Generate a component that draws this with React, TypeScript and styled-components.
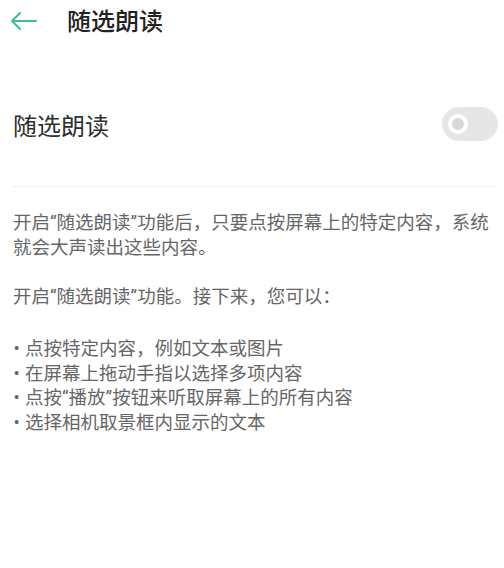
import React from "react";
import styled, { createGlobalStyle } from "styled-components";

const Global = createGlobalStyle`
  html, body { margin: 0; padding: 0; background: #ffffff; }
  body {
    font-family: Roboto, "Noto Sans CJK SC", sans-serif;
    -webkit-font-smoothing: antialiased;
  }
`;

const Page = styled.div`
  width: 504px;
  min-height: 568px;
  background: #fff;
  display: flex;
  flex-direction: column;
`;

const Header = styled.header`
  height: 42px;
  display: flex;
  align-items: center;
  padding-left: 10px;
  gap: 30px;
`;

const BackButton = styled.button`
  border: 0;
  background: none;
  padding: 0;
  width: 27px;
  height: 24px;
  display: flex;
  align-items: center;
  justify-content: center;
  cursor: pointer;
`;

const Title = styled.h1`
  margin: 0;
  font-size: 24px;
  font-weight: 500;
  color: #222;
  line-height: 1;
  padding-top: 2px;
`;

const SettingRow = styled.div`
  margin-top: 57px;
  height: 50px;
  padding: 0 6px 0 13px;
  display: flex;
  align-items: center;
  justify-content: space-between;
`;

const Label = styled.span`
  font-size: 24px;
  color: #2e2e2e;
  font-weight: 400;
`;

const Switch = styled.button<{ $on?: boolean }>`
  width: 56px;
  height: 34px;
  border-radius: 17px;
  border: 0;
  background: ${(p) => (p.$on ? "#3dbd8d" : "#e6e6e6")};
  padding: 0 0 0 6px;
  display: flex;
  align-items: center;
  cursor: pointer;
`;

const Knob = styled.span`
  width: 20px;
  height: 20px;
  border-radius: 50%;
  box-sizing: border-box;
  border: 4px solid #ffffff;
  background: #d8d8d8;
`;

const Divider = styled.hr`
  margin: 37px 7px 0 13px;
  border: 0;
  height: 1px;
  background: #eeeeee;
`;

const Body = styled.div`
  padding: 24px 8px 0 13px;
  font-size: 18.5px;
  line-height: 24.5px;
  color: #666;
`;

const Para = styled.p`
  margin: 0 0 24.5px 0;
`;

const List = styled.ul`
  margin: 0;
  padding: 0;
  list-style: none;
  margin-top: 28px;
`;

const Item = styled.li`
  display: flex;
  gap: 5px;
`;

const Bullet = styled.span`
  width: 7px;
  text-align: center;
  flex: none;
`;

const items = [
  "点按特定内容，例如文本或图片",
  "在屏幕上拖动手指以选择多项内容",
  "点按“播放”按钮来听取屏幕上的所有内容",
  "选择相机取景框内显示的文本",
];

export default function App() {
  return (
    <Page>
      <Global />
      <Header>
        <BackButton aria-label="返回">
          <svg width="27" height="20" viewBox="0 0 27 20" fill="none">
            <path
              d="M26 10H2M10 2L2 10L10 18"
              stroke="#3dbd8d"
              strokeWidth="2"
              strokeLinecap="round"
              strokeLinejoin="round"
            />
          </svg>
        </BackButton>
        <Title>随选朗读</Title>
      </Header>
      <SettingRow>
        <Label>随选朗读</Label>
        <Switch aria-label="随选朗读开关">
          <Knob />
        </Switch>
      </SettingRow>
      <Divider />
      <Body>
        <Para>开启“随选朗读”功能后，只要点按屏幕上的特定内容，系统就会大声读出这些内容。</Para>
        <Para>开启“随选朗读”功能。接下来，您可以：</Para>
        <List>
          {items.map((t) => (
            <Item key={t}>
              <Bullet>•</Bullet>
              <span>{t}</span>
            </Item>
          ))}
        </List>
      </Body>
    </Page>
  );
}
